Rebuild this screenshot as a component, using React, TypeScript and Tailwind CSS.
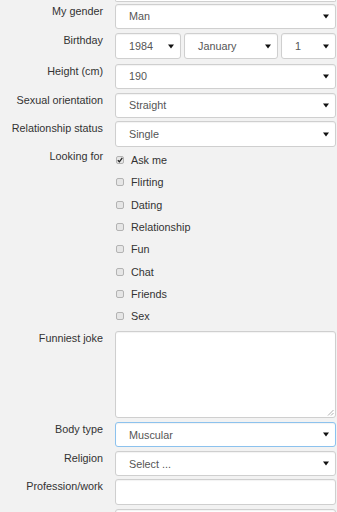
import React from "react";

const box =
  "bg-white border border-[#cfcfcf] rounded-[3px] text-[#555] shadow-[inset_0_1px_1px_rgba(0,0,0,0.05)]";

function Arrow() {
  return (
    <svg width="6" height="5" viewBox="0 0 6 5" className="shrink-0">
      <path d="M0 0.5 H6 L3 4.5 Z" fill="#111" />
    </svg>
  );
}

function Select({
  value,
  className = "",
  focused = false,
}: {
  value: string;
  className?: string;
  focused?: boolean;
}) {
  return (
    <div
      className={`${box} flex items-center justify-between pl-[13px] pr-[6px] ${
        focused ? "!border-[#8cc2ee] shadow-[0_0_4px_rgba(102,175,233,0.6)]" : ""
      } ${className}`}
    >
      <span>{value}</span>
      <Arrow />
    </div>
  );
}

function Row({
  label,
  className = "",
  children,
}: {
  label: string;
  className?: string;
  children: React.ReactNode;
}) {
  return (
    <div className={`flex gap-[12px] ${className}`}>
      <div className="w-[103px] shrink-0 text-right text-[#333] leading-[12px] pt-[1px]">
        {label}
      </div>
      <div className="w-[221px] shrink-0">{children}</div>
    </div>
  );
}

const lookingFor = [
  { label: "Ask me", checked: true },
  { label: "Flirting" },
  { label: "Dating" },
  { label: "Relationship" },
  { label: "Fun" },
  { label: "Chat" },
  { label: "Friends" },
  { label: "Sex" },
];

function Checkbox({ checked }: { checked?: boolean }) {
  return (
    <span className="w-[8px] h-[8px] rounded-[2px] border border-[#b3b3b3] bg-[#e6e6e6] flex items-center justify-center shrink-0">
      {checked && (
        <svg width="6" height="6" viewBox="0 0 6 6">
          <path d="M0.8 3.2 L2.4 4.8 L5.3 0.9" stroke="#222" strokeWidth="1.3" fill="none" />
        </svg>
      )}
    </span>
  );
}

export default function App() {
  return (
    <div className="w-[337px] h-[512px] overflow-hidden bg-[#f2f2f2] font-['Liberation_Sans',Arial,sans-serif] text-[10.8px]">
      {/* bottom edge of the field above */}
      <div className="ml-[115px] w-[221px] h-[2px] bg-white border border-t-0 border-[#cfcfcf] rounded-b-[3px]" />

      <Row label="My gender" className="mt-[2px]">
        <Select value="Man" className="h-[25px]" />
      </Row>

      <Row label="Birthday" className="mt-[4px]">
        <div className="flex gap-[3px]">
          <Select value="1984" className="h-[26px] w-[66px]" />
          <Select value="January" className="h-[26px] w-[94px]" />
          <Select value="1" className="h-[26px] w-[55px]" />
        </div>
      </Row>

      <Row label="Height (cm)" className="mt-[5px]">
        <Select value="190" className="h-[25px]" />
      </Row>

      <Row label="Sexual orientation" className="mt-[4px]">
        <Select value="Straight" className="h-[25px]" />
      </Row>

      <Row label="Relationship status" className="mt-[3px]">
        <Select value="Single" className="h-[26px]" />
      </Row>

      <Row label="Looking for" className="mt-[2px]">
        <div className="flex flex-col text-[#333]">
          {lookingFor.map((item) => (
            <div key={item.label} className="h-[22.3px] flex items-center gap-[7px] pl-[1px]">
              <Checkbox checked={item.checked} />
              <span>{item.label}</span>
            </div>
          ))}
        </div>
      </Row>

      <Row label="Funniest joke" className="mt-[4px]">
        <div className={`${box} h-[87px] relative`}>
          <svg width="7" height="7" viewBox="0 0 7 7" className="absolute right-[1px] bottom-[1px]">
            <path d="M6.5 1 L1 6.5 M6.5 4 L4 6.5" stroke="#999" strokeWidth="0.8" />
          </svg>
        </div>
      </Row>

      <Row label="Body type" className="mt-[4px]">
        <Select value="Muscular" className="h-[25px]" focused />
      </Row>

      <Row label="Religion" className="mt-[4px]">
        <Select value="Select ..." className="h-[25px]" />
      </Row>

      <Row label="Profession/work" className="mt-[3px]">
        <div className={`${box} h-[26px]`} />
      </Row>

      <Row label="Smoking" className="mt-[4px]">
        <div className={`${box} h-[26px]`} />
      </Row>
    </div>
  );
}
